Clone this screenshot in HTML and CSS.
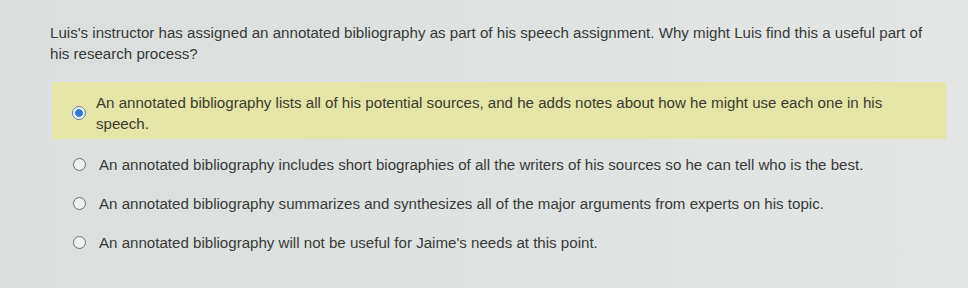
FILE: index.html
```html
<!DOCTYPE html>
<html lang="en">
<head>
  <meta charset="UTF-8">
  <meta name="viewport" content="width=device-width, initial-scale=1.0">
  <title>Question</title>
  <link rel="stylesheet" href="styles.css">
</head>
<body>
  <div class="quiz">
    <p class="question">Luis's instructor has assigned an annotated bibliography as part of his speech assignment. Why might Luis find this a useful part of his research process?</p>
    <div class="options">
      <label class="option selected">
        <span class="radio"></span>
        <span class="text">An annotated bibliography lists all of his potential sources, and he adds notes about how he might use each one in his speech.</span>
      </label>
      <label class="option">
        <span class="radio"></span>
        <span class="text">An annotated bibliography includes short biographies of all the writers of his sources so he can tell who is the best.</span>
      </label>
      <label class="option">
        <span class="radio"></span>
        <span class="text">An annotated bibliography summarizes and synthesizes all of the major arguments from experts on his topic.</span>
      </label>
      <label class="option">
        <span class="radio"></span>
        <span class="text">An annotated bibliography will not be useful for Jaime's needs at this point.</span>
      </label>
    </div>
  </div>
</body>
</html>
```

FILE: styles.css
```css
body { margin: 0; background: linear-gradient(90deg, #dadfdd 0%, #dfe3e1 60%, #e3e6e5 100%); font-family: "Liberation Sans", Arial, sans-serif; color: #383938; height: 288px; }
.quiz { padding: 22px 30px 0 50px; }
.question { margin: 0; font-size: 15.1px; line-height: 21px; }
.options { margin: 18px 0 0 2px; width: 894px; }
.option { display: flex; align-items: center; gap: 13px; padding: 9px 21px 9px 21px; font-size: 15.1px; line-height: 21px; }
.option.selected { background: #e4e5a6; color: #3a3b2e; padding: 10px 21px 5px 20px; margin-bottom: 6px; gap: 10px; }
.radio { flex: none; width: 11px; height: 11px; border: 1px solid #6f7271; border-radius: 50%; background: #eef0ef; }
.selected .radio { width: 12px; height: 12px; border: 1px solid #5a7fb0; background: radial-gradient(circle, #2f77cf 0 3.5px, #f2f4f8 4.3px); }
```
